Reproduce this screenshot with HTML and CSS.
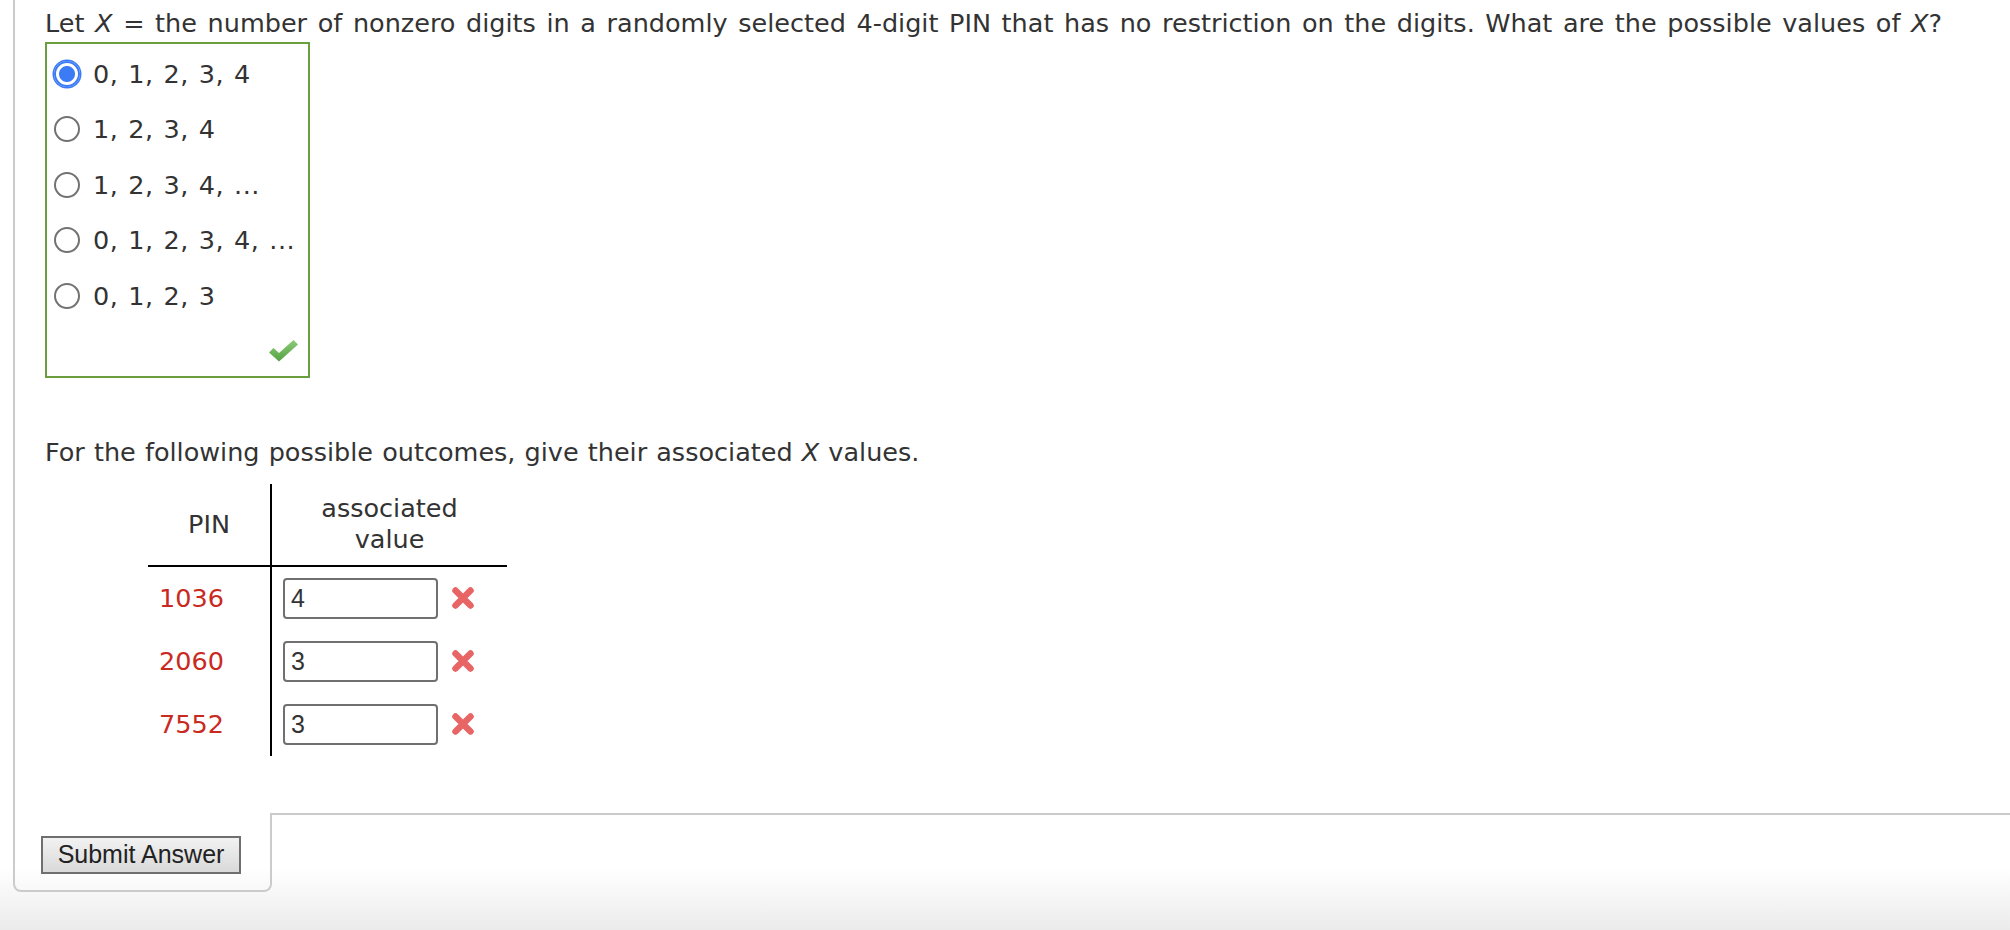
FILE: index.html
```html
<!DOCTYPE html>
<html lang="en">
<head>
  <meta charset="UTF-8">
  <title>PIN digits question</title>
  <link rel="stylesheet" href="styles.css">
</head>
<body>

<div class="qbox">
  <p class="prompt first">Let <i>X</i> = the number of nonzero digits in a randomly selected 4-digit PIN that has no restriction on the digits. What are the possible values of <i>X</i>?</p>

  <div class="choices">
    <label class="choice"><span class="radio on"></span><span>0, 1, 2, 3, 4</span></label>
    <label class="choice"><span class="radio"></span><span>1, 2, 3, 4</span></label>
    <label class="choice"><span class="radio"></span><span>1, 2, 3, 4, ...</span></label>
    <label class="choice"><span class="radio"></span><span>0, 1, 2, 3, 4, ...</span></label>
    <label class="choice"><span class="radio"></span><span>0, 1, 2, 3</span></label>
    <div class="mark">
      <svg width="31" height="24" viewBox="0 0 31 24">
        <defs>
          <linearGradient id="tick" x1="0" y1="0" x2="0" y2="1">
            <stop offset="0" stop-color="#8bcb77"/>
            <stop offset="1" stop-color="#55a243"/>
          </linearGradient>
        </defs>
        <path d="M1 13.5 L5.5 9 L11 14 L25.5 1 L30 5.5 L11 22.5 Z" fill="url(#tick)"/>
      </svg>
    </div>
  </div>

  <p class="prompt lead">For the following possible outcomes, give their associated <i>X</i> values.</p>

  <div class="outcomes">
    <div class="hd key">PIN</div>
    <div class="hd">associated<br>value</div>

    <div class="key pin">1036</div>
    <div class="val"><input type="text" value="4"><svg class="wrong" width="26" height="26" viewBox="0 0 26 26"><path d="M5.5 5.5 L20.5 20.5 M20.5 5.5 L5.5 20.5"/></svg></div>

    <div class="key pin">2060</div>
    <div class="val"><input type="text" value="3"><svg class="wrong" width="26" height="26" viewBox="0 0 26 26"><path d="M5.5 5.5 L20.5 20.5 M20.5 5.5 L5.5 20.5"/></svg></div>

    <div class="key pin">7552</div>
    <div class="val"><input type="text" value="3"><svg class="wrong" width="26" height="26" viewBox="0 0 26 26"><path d="M5.5 5.5 L20.5 20.5 M20.5 5.5 L5.5 20.5"/></svg></div>
  </div>
</div>

<div class="footer">
  <div class="tab"><button type="button">Submit Answer</button></div>
  <div class="rest"></div>
</div>

</body>
</html>
```

FILE: styles.css
```css
body {
  margin: 0;
  min-height: 930px;
  background: linear-gradient(#fff 0, #fff 868px, #ebebeb 930px);
  font-family: "DejaVu Sans", Verdana, sans-serif;
  font-size: 25.5px;
  color: #333;
}

.qbox {
  margin-left: 13px;
  border-left: 2px solid #cbcbcb;
  padding: 8px 0 57px 30px;
}

.prompt {
  margin: 0;
  line-height: 30px;
  word-spacing: 1px;
}

.prompt.first {
  word-spacing: 2.5px;
}

/* answer choices */
.choices {
  margin-top: 4px;
  width: 265px;
  box-sizing: border-box;
  border: 2px solid #6b9e3e;
  padding: 2px 9px 13px 7px;
}

.choice {
  display: flex;
  align-items: center;
  gap: 13px;
  height: 55.5px;
  word-spacing: 1px;
  letter-spacing: 0.6px;
}

.radio {
  width: 26px;
  height: 26px;
  box-sizing: border-box;
  border: 2px solid #727272;
  border-radius: 50%;
  background: #fff;
  flex: none;
}

.radio.on {
  border: 2.5px solid #3b7cf6;
  box-shadow: 0 0 0 1.5px #3b7cf6;
  background: radial-gradient(circle, #3b7cf6 0 7.5px, #fff 8.5px);
}

.mark {
  display: flex;
  justify-content: flex-end;
  margin-top: 15px;
  height: 24px;
}

.lead {
  margin-top: 59px;
}

/* outcomes table */
.outcomes {
  display: grid;
  grid-template-columns: 124px 235px;
  margin: 17px 0 0 103px;
}

.outcomes > div {
  height: 63px;
  box-sizing: border-box;
  display: flex;
  align-items: center;
}

.outcomes > .hd {
  height: 83px;
  border-bottom: 2px solid #000;
  justify-content: center;
  text-align: center;
  line-height: 31px;
}

.key {
  border-right: 2px solid #000;
}

.pin {
  color: #c92a1f;
  padding-left: 11px;
}

.val {
  padding-left: 11px;
  gap: 12px;
}

.val input {
  width: 155px;
  height: 41px;
  box-sizing: border-box;
  border: 2px solid #707070;
  border-radius: 4px;
  padding: 0 6px;
  margin: 0;
  font: 25px "Liberation Sans", Arial, sans-serif;
  color: #333;
  background: #fff;
}

.wrong path {
  stroke: #e86566;
  stroke-width: 6.5;
  stroke-linecap: round;
}

/* submit tab */
.footer {
  display: flex;
  margin-left: 13px;
}

.tab {
  border: 2px solid #cbcbcb;
  border-top: 0;
  border-radius: 0 0 8px 8px;
  padding: 23px 29px 16px 26px;
}

.rest {
  flex: 1;
  border-top: 2px solid #cbcbcb;
}

.tab button {
  display: block;
  width: 200px;
  height: 38px;
  padding: 0;
  border: 2px solid #6f6f6f;
  border-radius: 0;
  background: linear-gradient(#f2f2f2, #d9d9d9);
  font: 25px "Liberation Sans", Arial, sans-serif;
  color: #222;
}
```
